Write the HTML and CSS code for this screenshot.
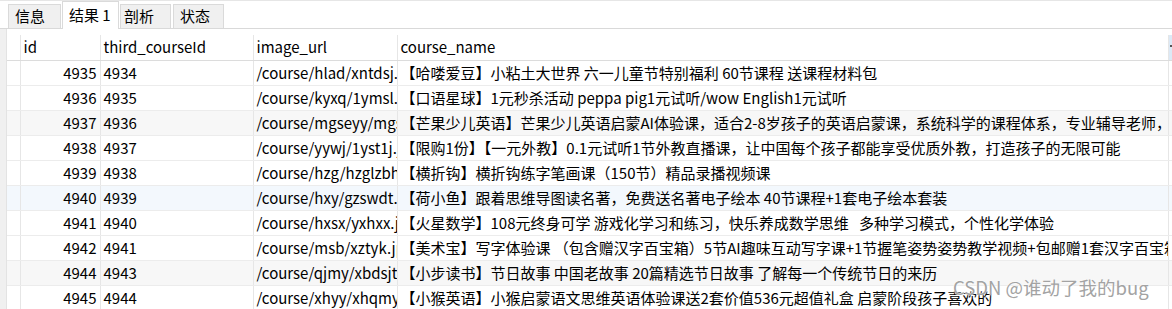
FILE: index.html
```html
<!DOCTYPE html>
<html lang="zh">
<head>
<meta charset="utf-8">
<title>结果 1</title>
<link rel="stylesheet" href="styles.css">
</head>
<body>
<div class="app">
  <div class="tabs">
    <div class="tab t-info">信息</div>
    <div class="tab t-result active">结果 1</div>
    <div class="tab t-prof">剖析</div>
    <div class="tab t-state">状态</div>
  </div>
  <div class="main">
    <div class="gutter"></div>
    <div class="grid-wrap">
      <table class="grid">
        <colgroup>
          <col class="c-ind"><col class="c-id"><col class="c-third"><col class="c-img"><col class="c-name"><col class="c-extra">
        </colgroup>
        <thead>
          <tr><th></th><th>id</th><th>third_courseId</th><th>image_url</th><th>course_name</th><th class="extra"><span class="mark"></span></th></tr>
        </thead>
        <tbody>
          <tr><td></td><td class="num">4935</td><td>4934</td><td>/course/hlad/xntdsj.jpg</td><td>【哈喽爱豆】小粘土大世界 六一儿童节特别福利 60节课程 送课程材料包</td><td></td></tr>
          <tr><td></td><td class="num">4936</td><td>4935</td><td>/course/kyxq/1ymsl.jpg</td><td>【口语星球】1元秒杀活动 peppa pig1元试听/wow English1元试听</td><td></td></tr>
          <tr class="alt"><td></td><td class="num">4937</td><td>4936</td><td>/course/mgseyy/mgseyy.jpg</td><td>【芒果少儿英语】芒果少儿英语启蒙AI体验课，适合2-8岁孩子的英语启蒙课，系统科学的课程体系，专业辅导老师，</td><td></td></tr>
          <tr><td></td><td class="num">4938</td><td>4937</td><td>/course/yywj/1yst1j.jpg</td><td>【限购1份】【一元外教】0.1元试听1节外教直播课，让中国每个孩子都能享受优质外教，打造孩子的无限可能</td><td></td></tr>
          <tr><td></td><td class="num">4939</td><td>4938</td><td>/course/hzg/hzglzbhk.jpg</td><td>【横折钩】横折钩练字笔画课（150节）精品录播视频课</td><td></td></tr>
          <tr class="hover"><td></td><td class="num">4940</td><td>4939</td><td>/course/hxy/gzswdt.jpg</td><td>【荷小鱼】跟着思维导图读名著，免费送名著电子绘本 40节课程+1套电子绘本套装</td><td></td></tr>
          <tr><td></td><td class="num">4941</td><td>4940</td><td>/course/hxsx/yxhxx.jpg</td><td>【火星数学】108元终身可学 游戏化学习和练习，快乐养成数学思维&nbsp;&nbsp; 多种学习模式，个性化学体验</td><td></td></tr>
          <tr><td></td><td class="num">4942</td><td>4941</td><td>/course/msb/xztyk.jpg</td><td>【美术宝】写字体验课 （包含赠汉字百宝箱）5节AI趣味互动写字课+1节握笔姿势姿势教学视频+包邮赠1套汉字百宝箱</td><td></td></tr>
          <tr class="alt"><td></td><td class="num">4944</td><td>4943</td><td>/course/qjmy/xbdsjt.jpg</td><td>【小步读书】节日故事 中国老故事 20篇精选节日故事 了解每一个传统节日的来历</td><td></td></tr>
          <tr><td></td><td class="num">4945</td><td>4944</td><td>/course/xhyy/xhqmyy.jpg</td><td>【小猴英语】小猴启蒙语文思维英语体验课送2套价值536元超值礼盒 启蒙阶段孩子喜欢的</td><td></td></tr>
        </tbody>
      </table>
    </div>
  </div>
  <div class="watermark">CSDN @谁动了我的bug</div>
</div>
</body>
</html>
```

FILE: styles.css
```css
* { box-sizing: border-box; }
html, body { margin: 0; padding: 0; background: #ffffff; }
body {
  font-family: "Noto Sans CJK SC", "Noto Sans", sans-serif;
  font-size: 15px;
  color: #000;
  width: 1172px;
  height: 309px;
  overflow: hidden;
}
.app { position: relative; width: 1172px; height: 309px; overflow: hidden; }

.tabs {
  height: 29px;
  display: flex;
  align-items: flex-end;
  padding-left: 8px;
  border-top: 1px solid #e6e6e6;
  border-bottom: 1px solid #d9d9d9;
  gap: 1px;
}
.tab {
  height: 24px;
  background: #f0f0f0;
  border: 1px solid #dadada;
  border-bottom: none;
  line-height: 22px;
  padding-left: 6px;
  white-space: nowrap;
}
.tab.active {
  height: 27px;
  background: #ffffff;
  line-height: 26px;
  margin-bottom: -1px;
  height: 28px;
}
.t-info { width: 53px; }
.t-result { width: 57px; }
.t-prof { width: 51px; padding-left: 3px; margin-left: 0; }
.t-state { width: 51px; margin-left: 1px; }

.main {
  display: flex;
  height: 280px;
}
.gutter {
  width: 7px;
  background: #f0f0f0;
  border-right: 1px solid #e3e3e3;
  flex: none;
}
.grid-wrap {
  flex: 1;
  padding-top: 6px;
  overflow: hidden;
}
.grid {
  border-collapse: collapse;
  table-layout: fixed;
  width: 1165px;
}
.c-ind { width: 13px; }
.c-id { width: 80px; }
.c-third { width: 153px; }
.c-img { width: 144px; }
.c-name { width: 771px; }
.c-extra { width: 4px; }

.grid th, .grid td {
  height: 25px;
  padding: 0 3px;
  white-space: nowrap;
  overflow: hidden;
  text-overflow: clip;
  border-right: 1px solid #e6e6e6;
  border-bottom: 1px solid #ececec;
  text-align: left;
  font-weight: normal;
  line-height: 24px;
}
.grid th { border-bottom: 1px solid #dcdcdc; }
.grid th:last-child, .grid td:last-child { border-right: none; padding: 0; }
.grid th.extra { background: #dce9f6; position: relative; }
.mark {
  position: absolute;
  left: 1px; top: 10px;
  width: 3px; height: 2px;
  background: #555;
}
.grid td.num { text-align: right; }
.grid tr.alt td { background: #f7f7f7; }
.grid tr.hover td { background: #f3f8fd; }

.watermark {
  position: absolute;
  left: 953px;
  top: 275px;
  font-size: 18.5px;
  color: #a3a3a3;
  white-space: nowrap;
  text-shadow: 0 0 1px #fff, 0 0 2px #fff;
  line-height: 24px;
}
```
